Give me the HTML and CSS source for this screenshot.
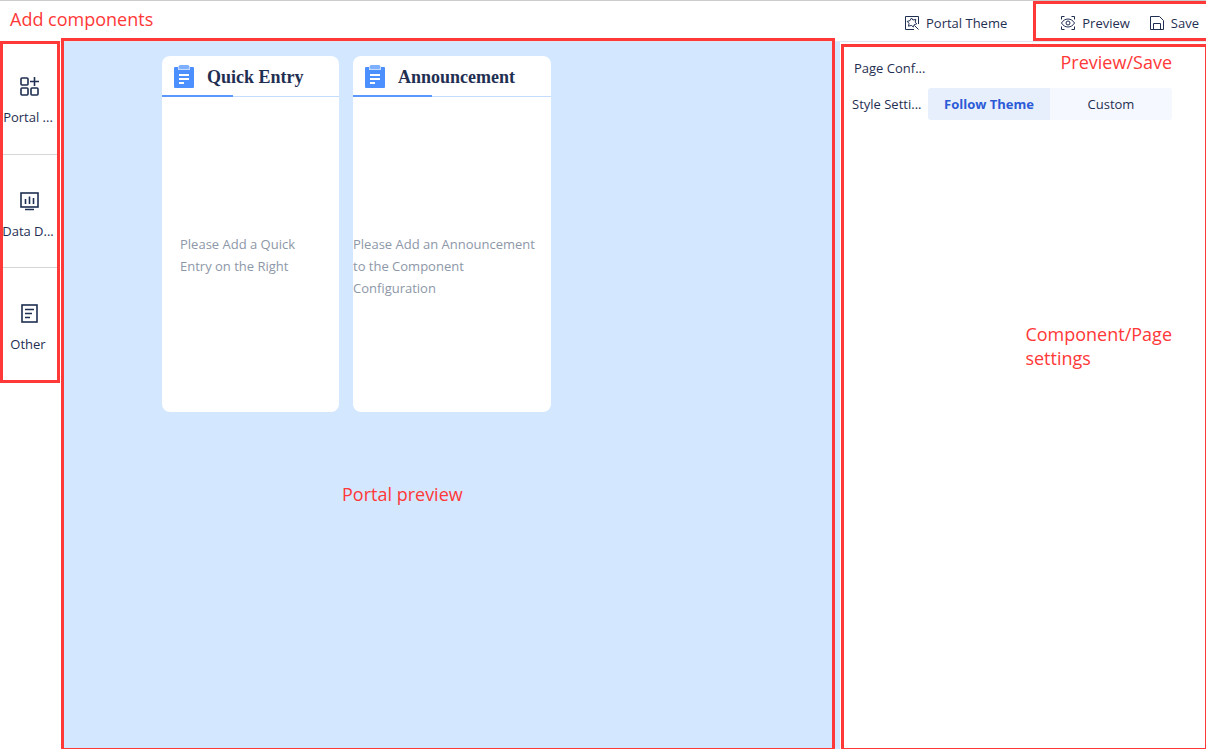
FILE: index.html
```html
<!DOCTYPE html>
<html lang="en">
<head>
    <meta charset="UTF-8">
    <meta name="viewport" content="width=device-width, initial-scale=1.0">
    <title>Portal Designer</title>
    <link rel="stylesheet" href="styles.css">
</head>
<body>

    <header class="topbar">
        <span class="note">Add components</span>
        <div class="topbar-right">
            <button type="button" class="tool">
                <svg width="16" height="16" viewBox="0 0 16 16">
                    <path d="M14.5 9V1.5h-13v13H10"/>
                    <path d="M7.5 3l1.4 2 2.9-.6-.6 2.7 1.6 1.7-2.5.8-1 2.300-2-1.500-2.800.8.5-2.800-1.800-2 2.700-.7z"/>
                    <path d="M10.5 10.500l4 4"/>
                </svg>
                Portal Theme
            </button>
            <div class="actions">
                <button type="button" class="tool">
                    <svg width="16" height="16" viewBox="0 0 16 16">
                        <path d="M1.5 4.5v-3h3M11.5 1.5h3v3M14.5 11.5v3h-3M4.5 14.5h-3v-3"/>
                        <path d="M1.5 8C3 5.5 5.300 4 8 4s5 1.500 6.500 4c-1.500 2.500-3.800 4-6.500 4s-5-1.500-6.500-4z"/>
                        <circle cx="8" cy="8" r="2"/>
                    </svg>
                    Preview
                </button>
                <button type="button" class="tool">
                    <svg width="16" height="16" viewBox="0 0 16 16">
                        <path d="M1.5 1.5h9l4 4v9h-13z"/>
                        <path d="M4.5 14.5v-6h7v6"/>
                    </svg>
                    Save
                </button>
            </div>
        </div>
    </header>

    <main class="layout">
        <aside class="sidebar">
            <nav class="menu">
                <a href="#" class="menu-item">
                    <svg width="22" height="22" viewBox="0 0 22 22">
                        <rect x="2" y="2" width="7" height="7" rx="1"/>
                        <rect x="2" y="12" width="7" height="7" rx="1"/>
                        <rect x="12" y="12" width="7" height="7" rx="1"/>
                        <path d="M15.5 1v9M11 5.500h9"/>
                    </svg>
                    <span class="menu-label">Portal ...</span>
                </a>
                <a href="#" class="menu-item">
                    <svg width="22" height="22" viewBox="0 0 22 22">
                        <rect x="2" y="3" width="17" height="14"/>
                        <path d="M6.500 9v5M10.500 6.500V14M14.500 8v6M6 19.500h9"/>
                    </svg>
                    <span class="menu-label">Data D...</span>
                </a>
                <a href="#" class="menu-item">
                    <svg width="22" height="22" viewBox="0 0 22 22">
                        <rect x="3" y="2" width="15" height="17"/>
                        <path d="M6 6.500h9M6 10.500h7M6 14.500h5"/>
                    </svg>
                    <span class="menu-label">Other</span>
                </a>
            </nav>
        </aside>

        <section class="canvas">
            <div class="frame canvas-frame"></div>
            <div class="cards">
                <article class="card">
                    <h2 class="card-title">
                        <svg width="20" height="24" viewBox="0 0 20 24">
                            <path class="board" d="M1 2h18a1 1 0 0 1 1 1v19a1 1 0 0 1-1 1H1a1 1 0 0 1-1-1V3a1 1 0 0 1 1-1z"/>
                            <rect class="clip-edge" x="4" y="1" width="12" height="4"/>
                            <rect class="clip" x="5" y="0" width="10" height="4" rx="1"/>
                            <path class="lines" d="M5 10h10M5 14h10M5 18h5"/>
                        </svg>
                        Quick Entry
                    </h2>
                    <div class="card-body card-body-narrow">
                        <p>Please Add a Quick Entry on the Right</p>
                    </div>
                </article>
                <article class="card">
                    <h2 class="card-title">
                        <svg width="20" height="24" viewBox="0 0 20 24">
                            <path class="board" d="M1 2h18a1 1 0 0 1 1 1v19a1 1 0 0 1-1 1H1a1 1 0 0 1-1-1V3a1 1 0 0 1 1-1z"/>
                            <rect class="clip-edge" x="4" y="1" width="12" height="4"/>
                            <rect class="clip" x="5" y="0" width="10" height="4" rx="1"/>
                            <path class="lines" d="M5 10h10M5 14h10M5 18h5"/>
                        </svg>
                        Announcement
                    </h2>
                    <div class="card-body">
                        <p>Please Add an Announcement to the Component Configuration</p>
                    </div>
                </article>
            </div>
            <p class="note note-canvas">Portal preview</p>
        </section>

        <section class="panel">
            <div class="frame panel-frame"></div>
            <h3 class="panel-title">Page Conf...</h3>
            <div class="setting">
                <span class="setting-label" id="styleLabel">Style Setti...</span>
                <div class="switch" role="group" aria-labelledby="styleLabel">
                    <button type="button" class="switch-btn active">Follow Theme</button>
                    <button type="button" class="switch-btn">Custom</button>
                </div>
            </div>
            <p class="note note-save">Preview/Save</p>
            <p class="note note-settings">Component/Page<br>settings</p>
        </section>
    </main>

</body>
</html>
```

FILE: styles.css
```css
* {
    box-sizing: border-box;
}

body {
    margin: 0;
    min-height: 100vh;
    display: flex;
    flex-direction: column;
    font-family: "Open Sans", "Noto Sans", sans-serif;
    font-size: 13px;
    color: #1f2f52;
    background-color: white;
}

h2, h3, p {
    margin: 0;
    font-weight: normal;
}

button {
    font: inherit;
    color: inherit;
    border: none;
    background: none;
    padding: 0;
    cursor: pointer;
}

svg {
    flex: none;
    fill: none;
    stroke: #1f2f52;
}

.note {
    font-size: 18px;
    line-height: 24px;
    color: #ff3838;
}

.frame {
    position: absolute;
    border: 3px solid #ff3838;
    pointer-events: none;
}

/* top bar */
.topbar {
    display: flex;
    justify-content: space-between;
    height: 42px;
    padding-left: 10px;
    border-top: 1px solid #ccc;
    border-bottom: 1px solid #e3e6f0;
}

.topbar .note {
    padding-top: 6px;
}

.topbar-right {
    display: flex;
    gap: 26px;
}

.tool {
    display: flex;
    align-items: center;
    gap: 6px;
    padding-top: 3px;
}

.actions {
    display: flex;
    gap: 19px;
    padding: 0 7px 0 24px;
    border: 3px solid #ff3838;
    border-right: none;
}

/* columns */
.layout {
    flex: 1;
    display: flex;
}

.sidebar {
    width: 61px;
}

.menu {
    margin: -1px 1px 0 0;
    border: 3px solid #ff3838;
}

.menu-item {
    display: flex;
    flex-direction: column;
    align-items: center;
    gap: 10px;
    height: 113px;
    padding-top: 35px;
    border-bottom: 1px solid #d6d6d6;
    color: inherit;
    text-decoration: none;
}

.menu-item:first-child {
    height: 111px;
    padding-top: 32px;
}

.menu-item:last-child {
    height: 112px;
    border-bottom: none;
}

.menu-item:hover {
    background-color: #f5f8ff;
}

.menu-item svg {
    stroke-width: 1.6;
}

.menu-label {
    padding-right: 4px;
    line-height: 18px;
    white-space: nowrap;
}

/* portal preview */
.canvas {
    flex: 1;
    position: relative;
    padding: 14px 20px 20px 101px;
    background-color: #d3e7ff;
}

.canvas-frame {
    inset: -4px 5px 0 0;
    border-bottom-width: 1px;
}

.cards {
    display: grid;
    grid-template-columns: 177px 198px;
    gap: 14px;
}

.card {
    display: flex;
    flex-direction: column;
    min-height: 356px;
    border-radius: 8px;
    background-color: white;
}

.card-title {
    display: flex;
    align-items: center;
    gap: 13px;
    height: 41px;
    padding: 2px 12px 0;
    font-family: "Liberation Serif", serif;
    font-size: 18px;
    font-weight: bold;
    border-bottom: 1px solid #c6dcff;
    position: relative;
}

.card-title::after {
    content: "";
    position: absolute;
    left: 0;
    bottom: -1px;
    width: 40%;
    height: 2px;
    background-color: #5a98fb;
}

.card-title svg {
    stroke: none;
}

.board {
    fill: #4c8fff;
}

.clip-edge {
    fill: #c3dbff;
}

.clip {
    fill: #7fb0ff;
}

.lines {
    stroke: white;
    stroke-width: 2;
}

.card-body {
    flex: 1;
    padding: 136px 12px 0 0;
    line-height: 22px;
    color: #8d97a8;
}

.card-body-narrow {
    padding: 136px 18px 0;
}

.note-canvas {
    position: absolute;
    top: 440px;
    left: 281px;
}

/* settings */
.panel {
    width: 366px;
    position: relative;
    padding: 16px 34px 16px 12px;
}

.panel-frame {
    inset: 2px 0 0 1px;
    border-right-width: 1px;
    border-bottom-width: 1px;
}

.panel-title {
    padding-left: 2px;
    font-size: 13px;
    line-height: 20px;
}

.setting {
    display: flex;
    gap: 4px;
    margin-top: 10px;
    line-height: 32px;
}

.setting-label {
    width: 72px;
    white-space: nowrap;
}

.switch {
    flex: 1;
    display: flex;
}

.switch-btn {
    flex: 1;
    height: 32px;
    background-color: #f5f8ff;
    border-radius: 0 3px 3px 0;
}

.switch-btn.active {
    background-color: #e8effc;
    border-radius: 3px 0 0 3px;
    color: #2b5bd7;
    font-weight: bold;
}

.note-save {
    position: absolute;
    top: 8px;
    right: 34px;
}

.note-settings {
    position: absolute;
    top: 280px;
    right: 34px;
}
```
